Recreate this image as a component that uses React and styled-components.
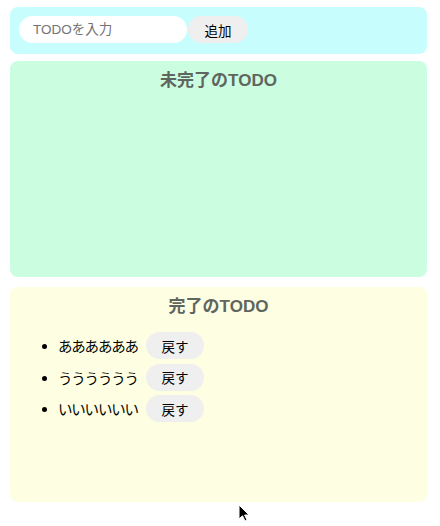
import React from "react";
import styled, { createGlobalStyle } from "styled-components";

const todos = ["ああああああ", "うううううう", "いいいいいい"];

function App() {
  return (
    <Page>
      <GlobalStyle />
      <InputArea>
        <TodoInput placeholder="TODOを入力" />
        <PillButton width="60px">追加</PillButton>
      </InputArea>
      <Area bg="#cbfde0" height="216px" mb="10px">
        <Title>未完了のTODO</Title>
      </Area>
      <Area bg="#fefee2" height="215px">
        <Title>完了のTODO</Title>
        <List>
          {todos.map((todo) => (
            <Row key={todo}>
              <RowText>{todo}</RowText>
              <PillButton width="58px">戻す</PillButton>
            </Row>
          ))}
        </List>
      </Area>
      <Cursor width="12" height="18" viewBox="0 0 12 18">
        <path
          d="M1 1 L1 15 L4.5 11.8 L7 17 L9 16 L6.6 11 L11 11 Z"
          fill="#000"
          stroke="#fff"
          strokeWidth="1"
          strokeLinejoin="round"
        />
      </Cursor>
    </Page>
  );
}

export default App;

const GlobalStyle = createGlobalStyle`
  body {
    margin: 0;
    background: #fff;
    font-family: "Liberation Sans", "Noto Sans CJK JP", sans-serif;
  }
`;

const Page = styled.div`
  position: relative;
  padding: 7px 10px;
  min-height: 526px;
  box-sizing: border-box;
`;

const InputArea = styled.div`
  display: flex;
  align-items: flex-start;
  width: 417px;
  height: 47px;
  box-sizing: border-box;
  padding: 9px;
  margin-bottom: 7px;
  background: #c7fdfd;
  border-radius: 8px;
`;

const TodoInput = styled.input`
  width: 168px;
  height: 27px;
  box-sizing: border-box;
  padding: 0 14px;
  margin-right: 1px;
  border: none;
  border-radius: 16px;
  outline: none;
  background: #fff;
  font-family: "Liberation Sans", "Noto Sans CJK JP", sans-serif;
  font-size: 13.5px;
  color: #000;

  &::placeholder {
    color: #737373;
  }
`;

const PillButton = styled.button`
  display: inline-flex;
  align-items: center;
  justify-content: center;
  width: ${(p) => p.width};
  height: 27px;
  padding: 0;
  border: none;
  border-radius: 16px;
  background: #efefef;
  color: #000;
  font-family: "Liberation Sans", "Noto Sans CJK JP", sans-serif;
  font-size: 13.5px;
  vertical-align: top;
  cursor: pointer;

  &:hover {
    background: #ff7fff;
    color: #fff;
  }
`;

const Area = styled.div`
  width: 417px;
  height: ${(p) => p.height};
  box-sizing: border-box;
  padding: 8px;
  margin-bottom: ${(p) => p.mb || "0"};
  background: ${(p) => p.bg};
  border-radius: 8px;
`;

const Title = styled.p`
  margin: 2px 0 0;
  text-align: center;
  font-size: 17px;
  line-height: 20px;
  font-weight: bold;
  color: #5f665f;
`;

const List = styled.ul`
  margin: 15px 0 0;
  padding-left: 40px;
`;

const Row = styled.li`
  height: 27px;
  line-height: 27px;
  margin-bottom: 4.7px;
  font-size: 15px;
  color: #000;
`;

const RowText = styled.span`
  display: inline-block;
  width: 80px;
  margin-right: 8px;
  font-family: "Noto Sans CJK JP", sans-serif;
  font-size: 14.5px;
  letter-spacing: -1.2px;
  white-space: nowrap;
  vertical-align: top;
`;

const Cursor = styled.svg`
  position: absolute;
  left: 238px;
  top: 504px;
`;
